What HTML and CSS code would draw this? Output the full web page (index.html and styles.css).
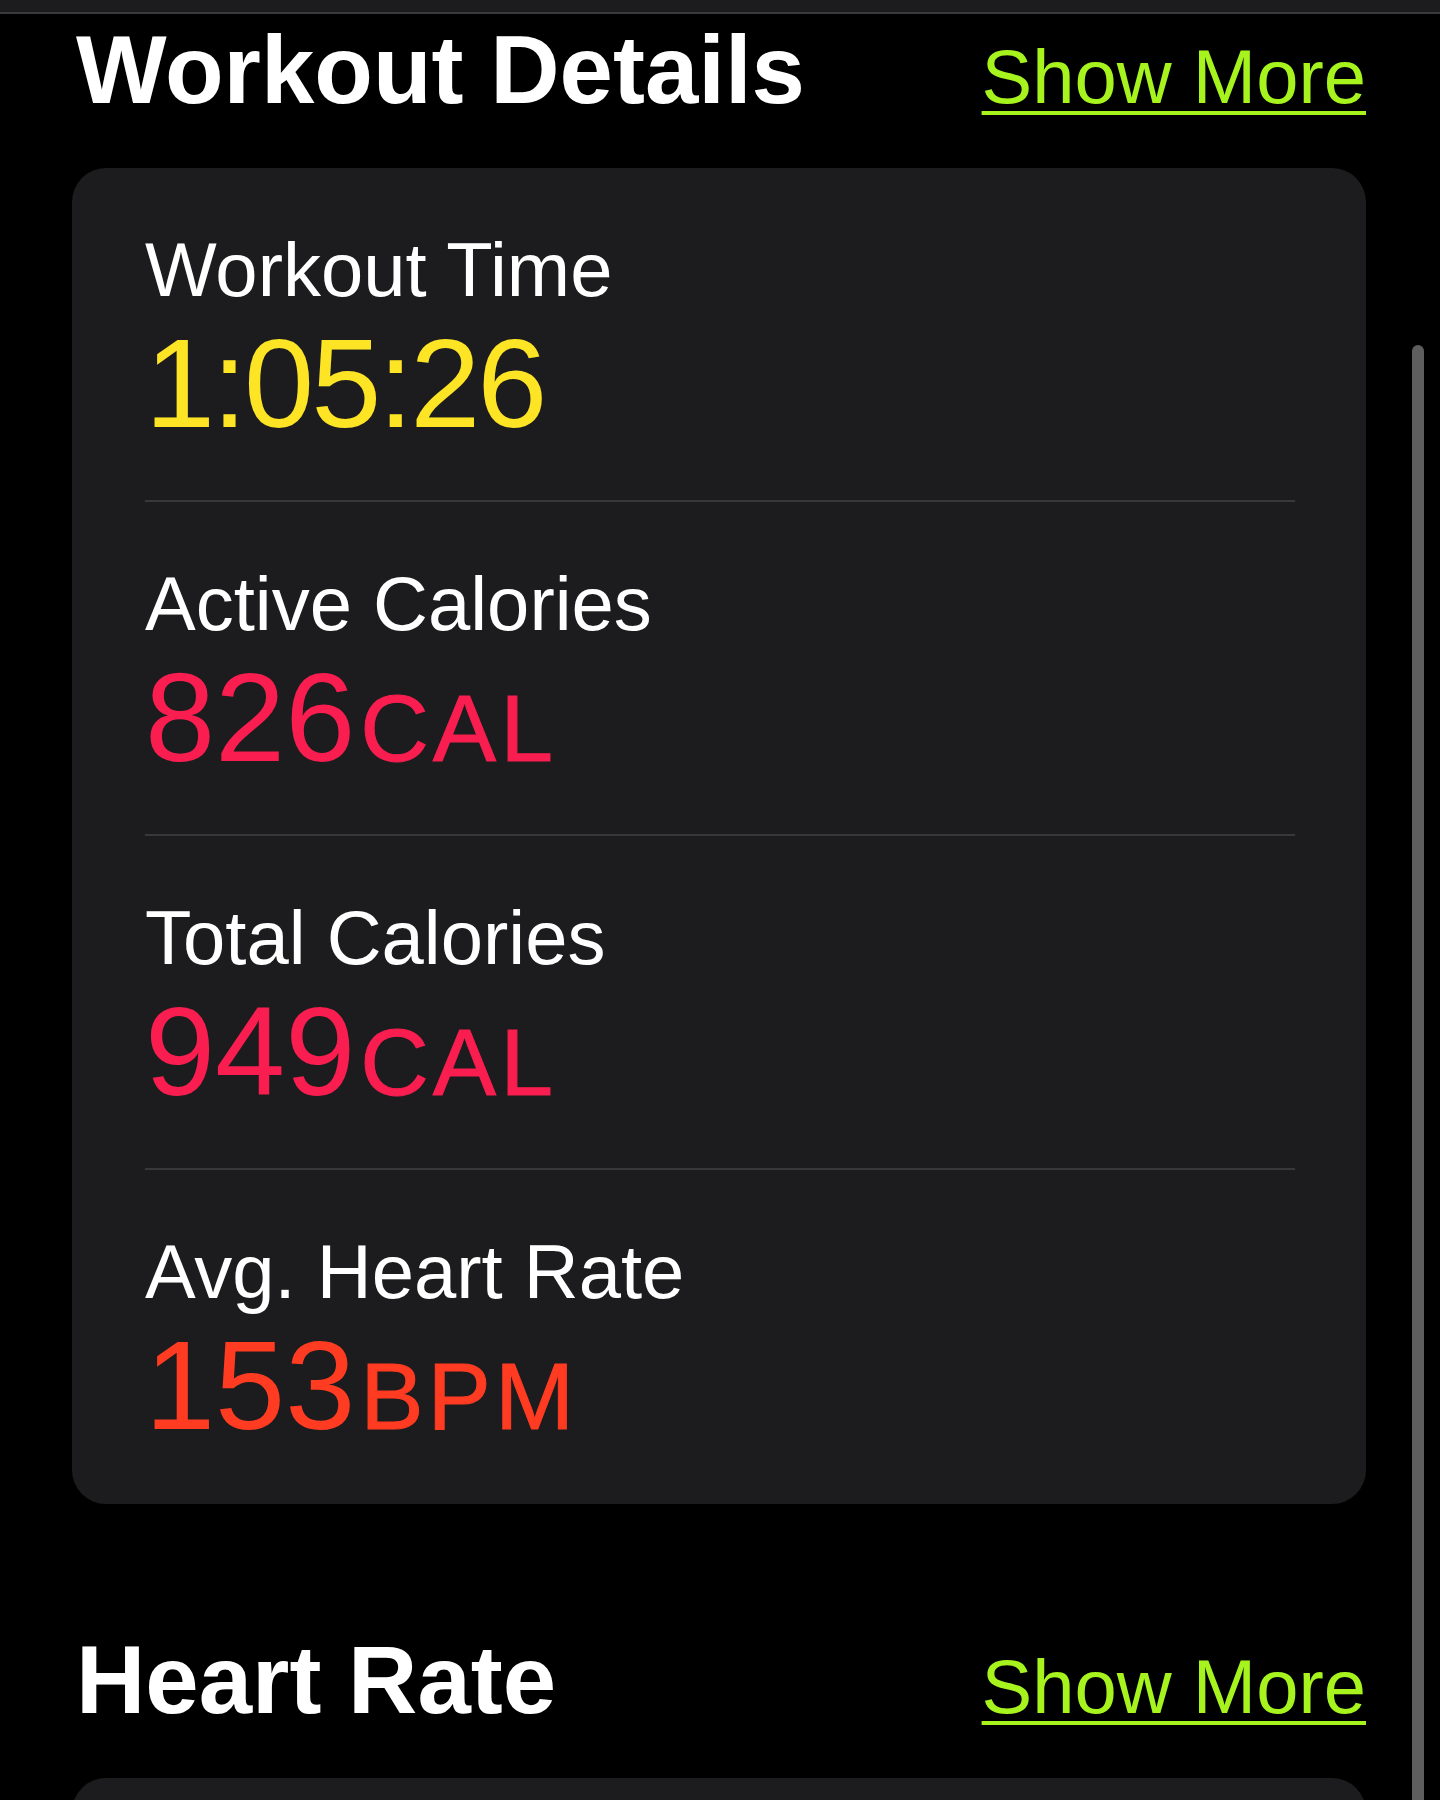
FILE: index.html
```html
<!DOCTYPE html>
<html lang="en">
<head>
    <meta charset="UTF-8">
    <meta name="viewport" content="width=device-width, initial-scale=1.0">
    <title>Workout</title>
    <link rel="stylesheet" href="styles.css">
</head>
<body>
    <div class="top-edge"></div>

    <section class="section">
        <header class="section-head">
            <h2 class="section-title">Workout Details</h2>
            <a class="show-more" href="#">Show More</a>
        </header>
        <div class="card">
            <div class="metric">
                <div class="metric-label">Workout Time</div>
                <div class="metric-value time">1:05:26</div>
            </div>
            <div class="metric">
                <div class="metric-label">Active Calories</div>
                <div class="metric-value cal">826<span class="unit">CAL</span></div>
            </div>
            <div class="metric">
                <div class="metric-label">Total Calories</div>
                <div class="metric-value cal">949<span class="unit">CAL</span></div>
            </div>
            <div class="metric">
                <div class="metric-label">Avg. Heart Rate</div>
                <div class="metric-value bpm">153<span class="unit">BPM</span></div>
            </div>
        </div>
    </section>

    <section class="section heart">
        <header class="section-head">
            <h2 class="section-title">Heart Rate</h2>
            <a class="show-more" href="#">Show More</a>
        </header>
        <div class="card card-peek"></div>
    </section>

    <div class="scrollbar"></div>
</body>
</html>
```

FILE: styles.css
```css
html, body {
    margin: 0;
    background: #000;
}
body {
    position: relative;
    height: 1800px;
    overflow: hidden;
    font-family: "Liberation Sans", Arial, sans-serif;
    color: #fff;
}
.top-edge {
    height: 12px;
    background: #1c1c1e;
    border-bottom: 2px solid #3a3a3c;
}
.section-head {
    display: flex;
    justify-content: space-between;
    align-items: baseline;
    padding: 0 74px 0 76px;
    margin-top: 8px;
}
.heart .section-head {
    margin-top: 128px;
}
.section-title {
    margin: 0;
    font-size: 96px;
    line-height: 96px;
    font-weight: bold;
}
.show-more {
    font-size: 76px;
    line-height: 76px;
    color: #a6f31e;
    text-decoration: underline;
    text-decoration-thickness: 4px;
    text-underline-offset: 8px;
}
.card {
    margin: 50px 74px 0 72px;
    padding: 0 71px 0 73px;
    background: #1c1c1e;
    border-radius: 34px;
}
.card-peek {
    height: 100px;
}
.metric {
    padding: 64px 0 53px;
    border-bottom: 2px solid #38383a;
}
.metric:last-child {
    border-bottom: none;
    padding-bottom: 55px;
}
.metric-label {
    font-size: 76px;
    line-height: 76px;
    color: #fff;
}
.metric-value {
    margin-top: 13px;
    height: 126px;
    font-size: 126px;
    line-height: 126px;
}
.unit {
    margin-left: 5px;
    font-size: 95px;
    line-height: 1;
    letter-spacing: 4px;
    -webkit-text-stroke: 1px currentColor;
}
.time {
    color: #fde425;
    letter-spacing: -3px;
}
.cal {
    color: #fa1e50;
}
.bpm {
    color: #ff3b22;
}
.scrollbar {
    position: absolute;
    left: 1412px;
    top: 345px;
    width: 12px;
    height: 1500px;
    border-radius: 6px;
    background: #5e5e5e;
}
```
